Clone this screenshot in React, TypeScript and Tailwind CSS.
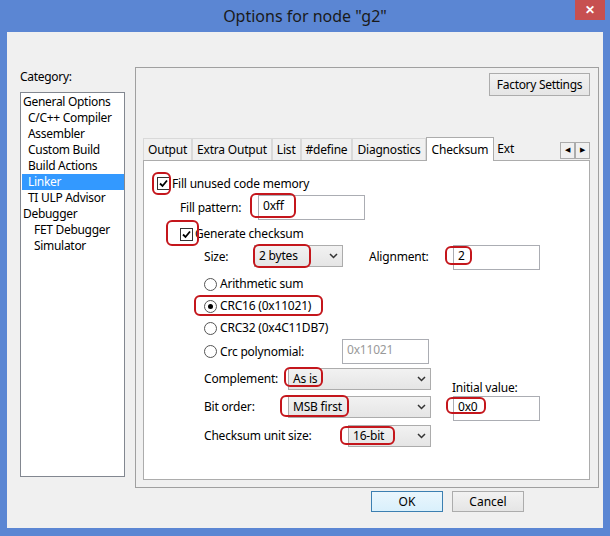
const font = { fontFamily: '"Noto Sans", "Open Sans", sans-serif' };

function Check() {
  return (
    <span className="w-[13px] h-[13px] border border-[#333] bg-white flex items-center justify-center shrink-0">
      <svg width="9" height="9" viewBox="0 0 9 9"><path d="M1 4.5 L3.5 7 L8 1.5" stroke="#000" strokeWidth="1.8" fill="none" /></svg>
    </span>
  );
}

function Radio({ on }: { on?: boolean }) {
  return (
    <span className="w-[13px] h-[13px] rounded-full border border-[#555] bg-white flex items-center justify-center shrink-0">
      {on && <span className="w-[5px] h-[5px] rounded-full bg-black" />}
    </span>
  );
}

function Select({ w, v }: { w: number; v: string }) {
  return (
    <div className="h-[22px] border border-[#acacac] bg-gradient-to-b from-[#f2f2f2] to-[#e5e5e5] flex items-center px-[4px]" style={{ width: w }}>
      <span className="flex-1">{v}</span>
      <svg width="9" height="6" viewBox="0 0 9 6"><path d="M1 1 L4.5 4.5 L8 1" stroke="#333" strokeWidth="1.5" fill="none" /></svg>
    </div>
  );
}

function Input({ w, v, gray }: { w: number; v: string; gray?: boolean }) {
  return (
    <div className={`h-[25px] border border-[#abadb3] bg-white px-[4px] pt-[1px] ${gray ? "text-[#999]" : ""}`} style={{ width: w }}>
      {v}
    </div>
  );
}

const marks = [
  [152, 172, 19, 23],
  [250, 193, 46, 25],
  [166, 220, 33, 26],
  [253, 244, 58, 24],
  [445, 246, 27, 19],
  [194, 295, 129, 21],
  [284, 367, 39, 20],
  [280, 395, 69, 22],
  [446, 397, 40, 17],
  [340, 426, 55, 19],
];

export default function App() {
  const cats = ["General Options", "C/C++ Compiler", "Assembler", "Custom Build", "Build Actions", "Linker", "TI ULP Advisor", "Debugger", "FET Debugger", "Simulator"];
  const indent = [0, 1, 1, 1, 1, 1, 1, 0, 1, 1];
  const tabs = ["Output", "Extra Output", "List", "#define", "Diagnostics"];
  return (
    <div className="relative w-[610px] h-[536px] bg-[#5b86d3] text-[12px] text-black flex flex-col" style={font}>
      <div className="h-[32px] flex items-center justify-center relative">
        <span className="text-[16px] text-[#1a1a1a]">Options for node "g2"</span>
        <div className="absolute right-[5px] top-0 w-[30px] h-[20px] bg-[#c75050] flex items-center justify-center text-white text-[12px] font-bold">✕</div>
      </div>
      <div className="mx-[7px] mb-[8px] flex-1 bg-[#f0f0f0] flex flex-col">
        <div className="flex flex-1 pt-[35px]">
          <div className="w-[128px] pl-[13px] pt-[2px] tracking-[-0.3px]">
            <div className="h-[16px] leading-[16px]">Category:</div>
            <div className="mt-[7px] w-[105px] h-[385px] bg-white border border-[#828790] pt-[1px] pl-[1px]">
              {cats.map((c, i) => (
                <div key={c} className={`h-[16px] leading-[16px] ${i === 5 ? "bg-[#3399ff] text-white" : ""} ${indent[i] ? (i > 7 ? "pl-[12px]" : "pl-[6px]") : "pl-[1px]"}`}>{c}</div>
              ))}
            </div>
          </div>
          <div className="w-[464px] h-[421px] border border-[#a0a0a0] bg-[#f0f0f0] flex flex-col">
            <div className="flex justify-end pt-[5px] pr-[8px]">
              <div className="w-[101px] h-[23px] border border-[#acacac] bg-gradient-to-b from-[#f2f2f2] to-[#e5e5e5] flex items-center justify-center tracking-[-0.3px]">Factory Settings</div>
            </div>
            <div className="mt-[41px] ml-[7px] flex items-end h-[23px] tracking-[-0.2px]">
              {tabs.map((t) => (
                <div key={t} className="h-[22px] px-[4px] border border-[#d9d9d9] border-b-0 bg-[#f0f0f0] flex items-center">{t}</div>
              ))}
              <div className="h-[24px] px-[5px] border border-[#acacac] border-b-0 bg-white flex items-center -mb-px relative z-10">Checksum</div>
              <div className="h-[22px] flex-1 min-w-0 pl-[3px] overflow-hidden flex items-center whitespace-nowrap">Ext</div>
              <div className="flex ml-[1px] mb-[1px] mr-[8px] shrink-0">
                <div className="w-[15px] h-[17px] border border-[#acacac] bg-[#f0f0f0] text-[7px] flex items-center justify-center">◀</div>
                <div className="w-[15px] h-[17px] border border-[#acacac] bg-[#f0f0f0] text-[7px] flex items-center justify-center">▶</div>
              </div>
            </div>
            <div className="mx-[7px] w-[447px] h-[320px] bg-white border border-[#acacac] pl-[13px] pt-[13px] tracking-[-0.2px]">
              <div className="flex items-center gap-[2px] h-[19px]"><Check />Fill unused code memory</div>
              <div className="flex items-center h-[25px] mt-[2px] pl-[23px]">
                <span className="w-[78px]">Fill pattern:</span>
                <Input w={107} v="0xff" />
              </div>
              <div className="flex items-center gap-[2px] h-[18px] mt-[5px] pl-[23px]"><Check />Generate checksum</div>
              <div className="flex items-start h-[25px] mt-[2px] pl-[47px]">
                <span className="w-[50px] pt-[3px]">Size:</span>
                <Select w={89} v="2 bytes" />
                <span className="w-[84px] ml-[26px] pt-[3px]">Alignment:</span>
                <Input w={87} v="2" />
              </div>
              <div className="pl-[47px] mt-[3px] flex flex-col">
                <div className="flex items-center gap-[3px] h-[22px]"><Radio />Arithmetic sum</div>
                <div className="flex items-center gap-[3px] h-[22px]"><Radio on />CRC16 (0x11021)</div>
                <div className="flex items-center gap-[3px] h-[22px]"><Radio />CRC32 (0x4C11DB7)</div>
                <div className="flex items-center h-[25px]">
                  <span className="flex items-center gap-[3px] w-[138px]"><Radio />Crc polynomial:</span>
                  <Input w={87} v="0x11021" gray />
                </div>
              </div>
              <div className="pl-[47px] mt-[4px] flex">
                <div className="flex flex-col">
                  <div className="flex items-center h-[22px]"><span className="w-[84px]">Complement:</span><Select w={143} v="As is" /></div>
                  <div className="flex items-center h-[22px] mt-[6px]"><span className="w-[84px]">Bit order:</span><Select w={143} v="MSB first" /></div>
                  <div className="flex items-center h-[22px] mt-[7px]"><span className="w-[144px]">Checksum unit size:</span><Select w={83} v="16-bit" /></div>
                </div>
                <div className="ml-[22px] pt-[11px] flex flex-col">
                  <span className="h-[17px] -ml-[1px]">Initial value:</span>
                  <Input w={87} v="0x0" />
                </div>
              </div>
            </div>
          </div>
        </div>
        <div className="h-[40px] flex justify-end items-start pr-[79px] gap-[9px] pt-[3px]">
          <div className="w-[72px] h-[21px] border border-[#3c7fb1] bg-gradient-to-b from-[#eaf6fd] to-[#d9f0fc] flex items-center justify-center">OK</div>
          <div className="w-[72px] h-[21px] border border-[#acacac] bg-gradient-to-b from-[#f2f2f2] to-[#e5e5e5] flex items-center justify-center">Cancel</div>
        </div>
      </div>
      {marks.map(([x, y, w, h], i) => (
        <div key={i} className="absolute border-[2.5px] border-[#c4161c] rounded-[6px] pointer-events-none" style={{ left: x, top: y, width: w, height: h }} />
      ))}
    </div>
  );
}
